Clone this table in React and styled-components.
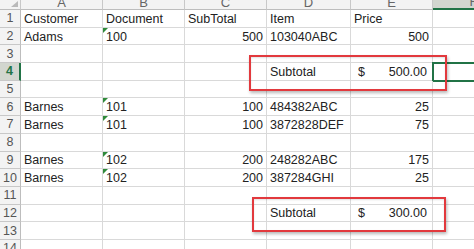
import React from 'react';
import styled, { createGlobalStyle } from 'styled-components';

const GlobalStyle = createGlobalStyle`
  html, body {
    margin: 0;
    padding: 0;
    background: #ffffff;
    overflow: hidden;
  }
`;

const GRID = '#d9d9d9';
const GREEN = '#217346';

const Viewport = styled.div`
  width: 474px;
  height: 249px;
  overflow: hidden;
`;

const Sheet = styled.div`
  position: relative;
  display: grid;
  grid-template-columns: 21px 82px 82px 82px 84px 82px 82px;
  grid-template-rows: 10px repeat(14, 17.7px);
  font-family: "Liberation Sans", Arial, sans-serif;
  font-size: 12.5px;
  color: #222;
`;

const ColHeader = styled.div`
  display: flex;
  align-items: flex-end;
  justify-content: center;
  overflow: hidden;
  background: ${(p) => (p.$active ? '#d2d6cf' : '#f3f3f3')};
  border-right: 1px solid #c8c8c8;
  border-bottom: ${(p) => (p.$active ? `2px solid ${GREEN}` : '1px solid #bdbdbd')};
  color: #666;
  font-size: 13px;
  line-height: 13px;
  box-sizing: border-box;
  padding-bottom: 0;
`;

const Corner = styled(ColHeader)`
  position: relative;
  &::after {
    content: '';
    position: absolute;
    right: 2px;
    bottom: 2px;
    border-left: 7px solid transparent;
    border-bottom: 6px solid #b9b9b9;
  }
`;

const RowHeader = styled.div`
  display: flex;
  align-items: center;
  justify-content: center;
  background: ${(p) => (p.$active ? '#d2d6cf' : '#f3f3f3')};
  border-right: ${(p) => (p.$active ? `2px solid ${GREEN}` : '1px solid #bdbdbd')};
  border-bottom: 1px solid #c8c8c8;
  color: ${(p) => (p.$active ? GREEN : '#555')};
  font-weight: ${(p) => (p.$active ? 600 : 400)};
  font-size: 12.5px;
  box-sizing: border-box;
`;

const Cell = styled.div`
  position: relative;
  display: flex;
  align-items: center;
  justify-content: ${(p) => (p.$right ? 'flex-end' : 'flex-start')};
  padding: 1px 3px 0 3px;
  border-right: 1px solid ${GRID};
  border-bottom: 1px solid ${GRID};
  box-sizing: border-box;
  white-space: nowrap;
  overflow: visible;
  ${(p) =>
    p.$flag &&
    `
    &::before {
      content: '';
      position: absolute;
      left: 0;
      top: 0;
      border-top: 5px solid #2f8a3a;
      border-right: 5px solid transparent;
    }
  `}
`;

const Money = styled(Cell)`
  justify-content: space-between;
  padding: 1px 5px 0 7px;
`;

const Selected = styled(Cell)`
  border: 2px solid ${GREEN};
  margin: -1px 0 -1px -1px;
`;

const Callout = styled.div`
  position: absolute;
  border: 2px solid #e2393d;
  box-shadow: 1px 2px 3px rgba(0, 0, 0, 0.28), inset 0 1px 2px rgba(0, 0, 0, 0.12);
  pointer-events: none;
`;

const rows = [
  ['Customer', 'Document', 'SubTotal', 'Item', 'Price'],
  ['Adams', '100', '500', '103040ABC', '500'],
  [],
  ['sub', '500.00'],
  [],
  ['Barnes', '101', '100', '484382ABC', '25'],
  ['Barnes', '101', '100', '3872828DEF', '75'],
  [],
  ['Barnes', '102', '200', '248282ABC', '175'],
  ['Barnes', '102', '200', '387284GHI', '25'],
  [],
  ['sub', '300.00'],
  [],
  [],
];

const renderRow = (row, i) => {
  const n = i + 1;
  const active = n === 4;
  const key = (c) => `${n}-${c}`;
  const last = active ? <Selected key={key('f')} /> : <Cell key={key('f')} />;

  if (row[0] === 'sub') {
    return [
      <RowHeader key={key('h')} $active={active}>{n}</RowHeader>,
      <Cell key={key('a')} />,
      <Cell key={key('b')} />,
      <Cell key={key('c')} />,
      <Cell key={key('d')}>Subtotal</Cell>,
      <Money key={key('e')}><span>$</span><span>{row[1]}</span></Money>,
      last,
    ];
  }

  const [a, b, c, d, e] = row;
  const header = n === 1;
  return [
    <RowHeader key={key('h')} $active={active}>{n}</RowHeader>,
    <Cell key={key('a')}>{a}</Cell>,
    <Cell key={key('b')} $flag={!header && !!b}>{b}</Cell>,
    <Cell key={key('c')} $right={!header}>{c}</Cell>,
    <Cell key={key('d')}>{d}</Cell>,
    <Cell key={key('e')} $right={!header}>{e}</Cell>,
    last,
  ];
};

export default function App() {
  return (
    <Viewport>
      <GlobalStyle />
      <Sheet>
        <Corner />
        {['A', 'B', 'C', 'D', 'E', 'F'].map((l) => (
          <ColHeader key={`col-${l}`} $active={l === 'F'}>{l}</ColHeader>
        ))}
        {rows.map(renderRow)}
        <Callout style={{ left: 249, top: 55, width: 194, height: 32 }} />
        <Callout style={{ left: 252, top: 197, width: 190, height: 31 }} />
      </Sheet>
    </Viewport>
  );
}
